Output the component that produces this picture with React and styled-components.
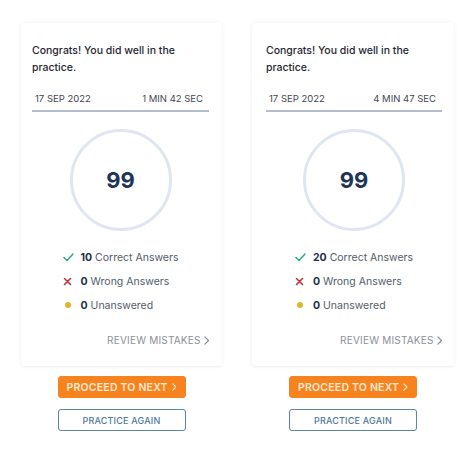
import React from "react";
import styled, { createGlobalStyle } from "styled-components";

const Global = createGlobalStyle`
  html, body { margin: 0; padding: 0; background: #ffffff; }
  body { font-family: Inter, "Noto Sans", sans-serif; -webkit-font-smoothing: antialiased; }
`;

const Page = styled.div`
  width: 474px;
  height: 474px;
  box-sizing: border-box;
  padding: 23px 0 0 21px;
  display: flex;
  gap: 30px;
  align-items: flex-start;
`;

const Column = styled.div`
  width: ${(p) => p.$w}px;
  display: flex;
  flex-direction: column;
  align-items: center;
`;

const Card = styled.div`
  width: 100%;
  box-sizing: border-box;
  height: 343px;
  background: #fff;
  border-radius: 4px;
  box-shadow: 0 0 4px rgba(40, 60, 120, 0.08), 0 1px 2px rgba(40, 60, 120, 0.04);
  padding: 19px ${(p) => p.$pr}px 0 ${(p) => p.$pl}px;
  display: flex;
  flex-direction: column;
`;

const Title = styled.div`
  font-size: 10.5px;
  line-height: 17px;
  color: #1f2733;
  font-weight: 500;
  width: 145px;
`;

const DateRow = styled.div`
  margin-top: 17px;
  display: flex;
  justify-content: space-between;
  padding: 0 6px 5px 3px;
  border-bottom: 2px solid #b4bccd;
  font-size: 9.5px;
  line-height: 12px;
  color: #3f4652;
`;

const Ring = styled.div`
  align-self: center;
  margin-top: 17px;
  width: 102px;
  height: 102px;
  box-sizing: border-box;
  border-radius: 50%;
  border: 3px solid #dfe5f1;
  display: flex;
  align-items: center;
  justify-content: center;
  font-size: 22px;
  font-weight: 700;
  color: #1c3557;
`;

const List = styled.div`
  align-self: center;
  margin-top: 18px;
  display: flex;
  flex-direction: column;
  gap: 8px;
`;

const Row = styled.div`
  display: flex;
  align-items: center;
  height: 16px;
  font-size: 10.5px;
  color: #535c6a;
`;

const IconBox = styled.span`
  width: 18px;
  display: flex;
  align-items: center;
  justify-content: flex-start;
`;

const Dot = styled.span`
  width: 6px;
  height: 6px;
  border-radius: 50%;
  background: #e1b429;
  margin-left: 2px;
`;

const Num = styled.b`
  font-weight: 700;
  color: #1e2f48;
  margin-right: 3px;
`;

const Review = styled.div`
  margin-top: 21px;
  align-self: flex-end;
  display: flex;
  align-items: center;
  gap: 3px;
  font-size: 10px;
  letter-spacing: 0.2px;
  color: #8a8f98;
`;

const Button = styled.button`
  width: 128px;
  height: 22px;
  box-sizing: border-box;
  margin-top: ${(p) => p.$mt}px;
  border-radius: 3px;
  font-family: Inter, "Noto Sans", sans-serif;
  font-size: ${(p) => (p.$primary ? "10.5px" : "9px")};
  font-weight: ${(p) => (p.$primary ? 600 : 500)};
  letter-spacing: 0.2px;
  display: flex;
  align-items: center;
  justify-content: center;
  gap: 4px;
  padding: 0;
  cursor: pointer;
  background: ${(p) => (p.$primary ? "#f7831f" : "#ffffff")};
  color: ${(p) => (p.$primary ? "#fde9d4" : "#4f779a")};
  border: ${(p) => (p.$primary ? "1px solid #f7831f" : "1.5px solid #5b84a6")};
`;

const Chevron = ({ color = "currentColor", size = 8 }) => (
  <svg width={size * 0.6} height={size} viewBox="0 0 6 10" fill="none">
    <path d="M1 1l4 4-4 4" stroke={color} strokeWidth="1.4" strokeLinecap="round" strokeLinejoin="round" />
  </svg>
);

const Check = () => (
  <svg width="11" height="9" viewBox="0 0 11 9" fill="none">
    <path d="M1 4.5l3 3L10 1" stroke="#2eab77" strokeWidth="1.5" strokeLinecap="round" strokeLinejoin="round" />
  </svg>
);

const Cross = () => (
  <svg width="9" height="9" viewBox="0 0 9 9" fill="none">
    <path d="M1.5 1.5l6 6M7.5 1.5l-6 6" stroke="#c8333a" strokeWidth="1.6" strokeLinecap="round" />
  </svg>
);

const Result = ({ w, pl, pr, time, correct }) => (
  <Column $w={w}>
    <Card $pl={pl} $pr={pr}>
      <Title>Congrats! You did well in the practice.</Title>
      <DateRow>
        <span>17 SEP 2022</span>
        <span>{time}</span>
      </DateRow>
      <Ring>99</Ring>
      <List>
        <Row>
          <IconBox><Check /></IconBox>
          <Num>{correct}</Num>Correct Answers
        </Row>
        <Row>
          <IconBox><Cross /></IconBox>
          <Num>0</Num>Wrong Answers
        </Row>
        <Row>
          <IconBox><Dot /></IconBox>
          <Num>0</Num>Unanswered
        </Row>
      </List>
      <Review>
        REVIEW MISTAKES <Chevron size={9} />
      </Review>
    </Card>
    <Button $primary $mt={10}>
      PROCEED TO NEXT <Chevron size={8} />
    </Button>
    <Button $mt={11}>PRACTICE AGAIN</Button>
  </Column>
);

export default function App() {
  return (
    <>
      <Global />
      <Page>
        <Result w={201} pl={11} pr={13} time="1 MIN 42 SEC" correct={10} />
        <Result w={202} pl={14} pr={12} time="4 MIN 47 SEC" correct={20} />
      </Page>
    </>
  );
}
